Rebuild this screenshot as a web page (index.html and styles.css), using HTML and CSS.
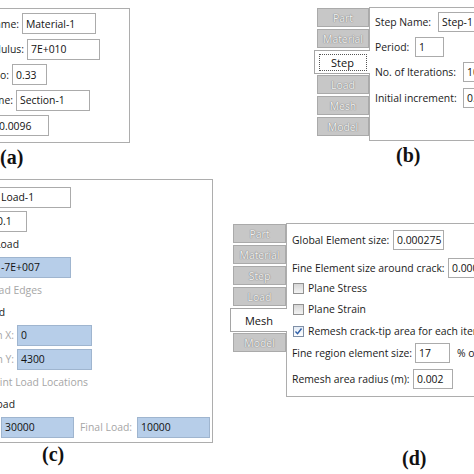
FILE: index.html
```html
<!DOCTYPE html>
<html>
<head>
<meta charset="utf-8">
<link rel="stylesheet" href="styles.css">
</head>
<body>
<div class="figure">

  <section class="cell">
    <div class="win win-a">
      <div class="row ra"><span class="lbl end w83">Material Name:</span><span class="tb w74">Material-1</span></div>
      <div class="row ra"><span class="lbl end w88">Young's Modulus:</span><span class="tb w73">7E+010</span></div>
      <div class="row ra"><span class="lbl end w73">Poisson's Ratio:</span><span class="tb w35">0.33</span></div>
      <div class="row ra"><span class="lbl end w77">Section Name:</span><span class="tb w74">Section-1</span></div>
      <div class="row ra"><span class="lbl end w56">Thickness:</span><span class="tb w54">0.0096</span></div>
    </div>
    <div class="cap cap-a">(a)</div>
  </section>

  <section class="cell">
    <div class="tabbed tabbed-b">
      <div class="tabs">
        <div class="tab">Part</div>
        <div class="tab">Material</div>
        <div class="tab sel"><span class="focus">Step</span></div>
        <div class="tab">Load</div>
        <div class="tab">Mesh</div>
        <div class="tab">Model</div>
      </div>
      <div class="win win-b">
        <div class="row rb"><span class="lbl w60">Step Name:</span><span class="tb tb20 w70">Step-1</span></div>
        <div class="row rb"><span class="lbl w37">Period:</span><span class="tb tb20 w29">1</span></div>
        <div class="row rb"><span class="lbl w85">No. of Iterations:</span><span class="tb tb20 w40">10</span></div>
        <div class="row rb"><span class="lbl w85">Initial increment:</span><span class="tb tb20 w40">0.1</span></div>
      </div>
    </div>
    <div class="cap cap-b">(b)</div>
  </section>

  <section class="cell">
    <div class="win win-c">
      <div class="row rt"><span class="lbl end w58">Load Name:</span><span class="tb w74">Load-1</span></div>
      <div class="row rt"><span class="lbl end w54">Load Step:</span><span class="tb w34">0.1</span></div>
      <div class="row rx"><span class="lbl end w83">Distributed Load</span></div>
      <div class="row rt"><span class="lbl end w58">Pressure:</span><span class="tb blue w74">-7E+007</span></div>
      <div class="row rx"><span class="lbl end w106 dis">Select Load Edges</span></div>
      <div class="row rx"><span class="lbl end w69">Point Load</span></div>
      <div class="row rt"><span class="lbl end w78 dis">Location X:</span><span class="tb blue w75">0</span></div>
      <div class="row rt"><span class="lbl end w78 dis">Location Y:</span><span class="tb blue w75">4300</span></div>
      <div class="row rx"><span class="lbl end w152 dis">Select Point Load Locations</span></div>
      <div class="row rx"><span class="lbl end w79">Cyclic Load</span></div>
      <div class="row rt"><span class="lbl end w62">Initial Load:</span><span class="tb blue w73">30000</span><span class="lbl dis w54 gap6">Final Load:</span><span class="tb blue w73">10000</span></div>
    </div>
    <div class="cap cap-c">(c)</div>
  </section>

  <section class="cell">
    <div class="tabbed tabbed-d">
      <div class="tabs tabs-d">
        <div class="tab">Part</div>
        <div class="tab">Material</div>
        <div class="tab">Step</div>
        <div class="tab">Load</div>
        <div class="tab sel">Mesh</div>
        <div class="tab">Model</div>
      </div>
      <div class="win win-d">
        <div class="row rd rd1"><span class="lbl w98">Global Element size:</span><span class="tb tb20 w51">0.000275</span></div>
        <div class="row rd rd2"><span class="lbl w153">Fine Element size around crack:</span><span class="tb tb20 w60">0.00005</span></div>
        <div class="row rd rd3"><span class="cb"></span><span>Plane Stress</span></div>
        <div class="row rd rd4"><span class="cb"></span><span>Plane Strain</span></div>
        <div class="row rd rd5"><span class="cb cb-on"><svg viewBox="0 0 11 11" width="9" height="9"><path d="M1.8 5.6 L4.3 8.2 L9.2 1.8" fill="none" stroke="#2f5fa8" stroke-width="1.7"/></svg></span><span>Remesh crack-tip area for each iteration</span></div>
        <div class="row rd rd6"><span class="lbl w120">Fine region element size:</span><span class="tb tb20 w35">17</span><span class="unit">% of global element size</span></div>
        <div class="row rd rd7"><span class="lbl w118">Remesh area radius (m):</span><span class="tb tb20 w40">0.002</span></div>
      </div>
    </div>
    <div class="cap cap-d">(d)</div>
  </section>

</div>
</body>
</html>
```

FILE: styles.css
```css
html, body {
  margin: 0;
  padding: 0;
}
html {
  overflow: hidden;
}
body {
  width: 474px;
  height: 474px;
  overflow: hidden;
  background: #fff;
  font-family: "Open Sans", "Noto Sans", sans-serif;
  font-size: 10.4px;
  color: #1b1b1b;
}

.figure {
  display: grid;
  grid-template-columns: 237px 237px;
  grid-template-rows: 175px 299px;
  width: 474px;
  height: 474px;
}

.cell {
  display: flex;
  flex-direction: column;
  align-items: flex-start;
  min-width: 0;
}

/* window panels */
.win {
  box-sizing: border-box;
  border: 1px solid #adadad;
  background: #fff;
  flex: none;
}
.win-a {
  width: 200px;
  height: 135px;
  margin: 8px 0 0 -70px;
  padding: 2.3px 0 0 5px;
}
.win-b {
  width: 160px;
  height: 134px;
  padding: 1.4px 0 0 5px;
}
.win-c {
  width: 283px;
  height: 264px;
  margin: 4px 0 0 -70px;
  padding: 5px 0 0 5px;
}
.win-d {
  width: 200px;
  height: 174px;
  padding: 6px 0 0 5px;
}

/* rows */
.row {
  display: flex;
  align-items: center;
  white-space: nowrap;
}
.ra { height: 25.4px; }
.rb { height: 25.2px; }
.rt { height: 24px; }
.rx { height: 22px; }
.rd { height: 20px; }
.rd2 { margin-top: 8px; }
.rd4 { margin-top: 1px; }
.rd5 { margin-top: 2px; }
.rd6 { margin-top: 2px; }
.rd7 { margin-top: 6px; }

.lbl {
  display: flex;
  flex: none;
  white-space: nowrap;
  margin-right: 3px;
}
.end { justify-content: flex-end; }
.dis { color: #a6a6a6; }
.gap6 { margin-left: 6px; }

.w29 { width: 29px; }
.w34 { width: 34px; }
.w35 { width: 35px; }
.w37 { width: 37px; }
.w40 { width: 40px; }
.w51 { width: 51px; }
.w54 { width: 54px; }
.w56 { width: 56px; }
.w58 { width: 58px; }
.w60 { width: 60px; }
.w62 { width: 62px; }
.w69 { width: 69px; }
.w70 { width: 70px; }
.w73 { width: 73px; }
.w74 { width: 74px; }
.w75 { width: 75px; }
.w77 { width: 77px; }
.w78 { width: 78px; }
.w79 { width: 79px; }
.w83 { width: 83px; }
.w85 { width: 85px; }
.w88 { width: 88px; }
.w98 { width: 98px; }
.w106 { width: 106px; }
.w118 { width: 118px; }
.w120 { width: 120px; }
.w152 { width: 152px; }
.w153 { width: 153px; }

/* text boxes */
.tb {
  box-sizing: border-box;
  flex: none;
  height: 21px;
  border: 1px solid #ababab;
  background: #fff;
  padding: 0 3px;
  display: flex;
  align-items: center;
  overflow: hidden;
  color: #111;
}
.tb20 { height: 20px; }
.blue {
  background: #b7cee9;
  border-color: #9fb5cf;
}
.unit { margin-left: 7px; }

/* check boxes */
.cb {
  box-sizing: border-box;
  flex: none;
  width: 11px;
  height: 11px;
  margin: 0 4px 0 1px;
  border: 1px solid #919191;
  background: linear-gradient(#d6d6d6, #f3f3f3);
  display: flex;
  align-items: center;
  justify-content: center;
}
.cb-on {
  background: linear-gradient(#e4ecf6, #ffffff);
  border-color: #7f8fa6;
}

/* tabbed windows */
.tabbed {
  display: flex;
  align-items: flex-start;
  flex: none;
}
.tabbed-b {
  margin: 7px 0 0 80px;
}
.tabbed-d {
  margin: 48px 0 0 -4px;
}
.tabs {
  display: flex;
  flex-direction: column;
  width: 52px;
  padding-top: 1px;
  flex: none;
}
.tabs-d { width: 53px; }
.tab {
  box-sizing: border-box;
  height: 19px;
  margin-bottom: 2px;
  border: 1px solid #aaaaaa;
  background: #c7c7c7;
  display: flex;
  align-items: center;
  justify-content: center;
  color: #f1f1f1;
  text-shadow: 0 0 1px #7d7d7d, 0 0 1px #7d7d7d;
}
.tab.sel {
  height: 24px;
  margin: 0 -1px 1px -3px;
  background: #fff;
  border-color: #a5a5a5;
  border-right: none;
  color: #111;
  text-shadow: none;
  font-size: 11px;
  z-index: 1;
}
.focus {
  box-sizing: border-box;
  width: 48px;
  height: 17px;
  border: 1px dotted #555;
  display: flex;
  align-items: center;
  justify-content: center;
}

/* captions */
.cap {
  font-family: "Liberation Serif", "Times New Roman", serif;
  font-weight: bold;
  font-size: 20px;
  line-height: 20px;
  color: #111;
  flex: none;
}
.cap-a { margin: 4px 0 0 0; }
.cap-b { margin: 4px 0 0 159px; }
.cap-c { margin: 1px 0 0 42px; }
.cap-d { margin: 51px 0 0 165px; }
```
